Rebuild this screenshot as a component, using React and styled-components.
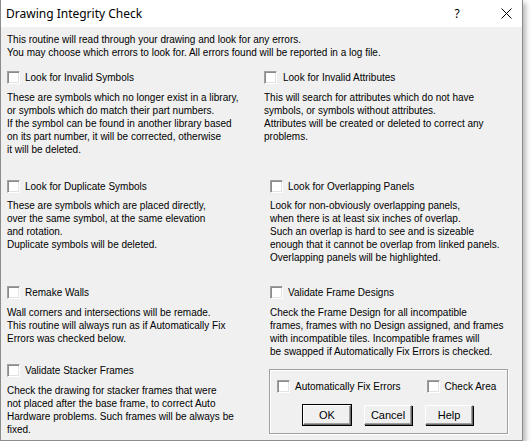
import React from 'react';
import styled, { createGlobalStyle } from 'styled-components';

const GlobalStyle = createGlobalStyle`
    html, body {
        margin: 0;
        padding: 0;
        background: #ffffff;
    }
`

const Window = styled.div`
    width: 521px;
    height: 440px;
    border: 1px solid #8c8c8c;
    border-top: none;
    background: #f0f0f0;
    box-shadow: 3px 3px 5px rgba(0, 0, 0, 0.28);
    display: flex;
    flex-direction: column;
    font-family: "Liberation Sans", Arial, sans-serif;
    font-size: 10px;
    line-height: 13px;
    color: #000;
    overflow: hidden;
`

const TitleBar = styled.div`
    height: 27px;
    background: #ffffff;
    display: flex;
    align-items: center;
    padding-left: 5px;
    font-family: "Noto Sans", "Open Sans", sans-serif;
    font-size: 12px;
`

const Title = styled.span`
    flex: 1;
    padding-bottom: 1px;
`

const TitleButton = styled.div`
    width: ${p => p.w}px;
    margin-right: ${p => p.space || 0}px;
    height: 27px;
    display: flex;
    align-items: center;
    justify-content: center;
    font-size: 12px;
`

const Body = styled.div`
    padding: 6px 0 0 6px;
    display: flex;
    flex-direction: column;
`

const Text = styled.div`
    white-space: nowrap;
`

const Row = styled.div`
    display: grid;
    grid-template-columns: 257px 1fr;
    margin-top: ${p => p.top}px;
    align-items: start;
`

const Cell = styled.div`
    padding-left: ${p => p.indent || 0}px;
    display: flex;
    flex-direction: column;
`

const CheckLabel = styled.label`
    display: flex;
    align-items: center;
    gap: ${p => p.gap || 5}px;
    height: 13px;
    white-space: nowrap;
    margin-bottom: ${p => p.below || 0}px;
`

const Box = styled.span`
    box-sizing: border-box;
    width: 13px;
    height: 13px;
    background: #fff;
    border: 1px solid;
    border-color: #a0a0a0 #ffffff #ffffff #a0a0a0;
    box-shadow: inset 1px 1px 0 #8a8a8a, inset -1px -1px 0 #e3e3e3;
    flex: none;
`

const GroupBox = styled.div`
    box-sizing: border-box;
    width: 239px;
    height: 65px;
    margin-left: 5px;
    margin-top: 5px;
    border: 1px solid #a0a0a0;
    box-shadow: 1px 1px 0 #fff, inset 1px 1px 0 #fff;
    padding: 10px 0 0 7px;
    display: flex;
    flex-direction: column;
`

const OptionRow = styled.div`
    display: flex;
    gap: 26px;
`

const ButtonRow = styled.div`
    display: flex;
    gap: 13px;
    margin-top: 12px;
    padding-left: 26px;
`

const Button = styled.button`
    box-sizing: border-box;
    width: 48px;
    height: 20px;
    padding: 0;
    background: #f0f0f0;
    font-family: "Liberation Sans", Arial, sans-serif;
    font-size: 11px;
    color: #000;
    border: 1px solid;
    border-color: #ffffff #696969 #696969 #ffffff;
    box-shadow: ${p => p.primary
        ? '0 0 0 1px #000, inset -1px -1px 0 #a0a0a0'
        : 'inset -1px -1px 0 #a0a0a0, 1px 1px 0 #000'};
`

const Check = ({ children, gap, below }) => (
    <CheckLabel gap={gap} below={below}>
        <Box />
        <span>{children}</span>
    </CheckLabel>
)

const Lines = ({ lines }) => (
    <>
        {lines.map((l, i) => <Text key={i}>{l}</Text>)}
    </>
)

const App = () => {
    return (
        <>
            <GlobalStyle />
            <Window>
                <TitleBar>
                    <Title>Drawing Integrity Check</Title>
                    <TitleButton w={40} space={13}>?</TitleButton>
                    <TitleButton w={32}>
                        <svg width="11" height="11" viewBox="0 0 11 11">
                            <path d="M0.5 0.5 L10.5 10.5 M10.5 0.5 L0.5 10.5" stroke="#000" strokeWidth="1" />
                        </svg>
                    </TitleButton>
                </TitleBar>
                <Body>
                    <Lines lines={[
                        'This routine will read through your drawing and look for any errors.',
                        'You may choose which errors to look for. All errors found will be reported in a log file.',
                    ]} />

                    <Row top={12}>
                        <Cell>
                            <Check below={7}>Look for Invalid Symbols</Check>
                            <Lines lines={[
                                'These are symbols which no longer exist in a library,',
                                'or symbols which do match their part numbers.',
                                'If the symbol can be found in another library based',
                                'on its part number, it will be corrected, otherwise',
                                'it will be deleted.',
                            ]} />
                        </Cell>
                        <Cell>
                            <Check gap={6} below={7}>Look for Invalid Attributes</Check>
                            <Lines lines={[
                                'This will search for attributes which do not have',
                                'symbols, or symbols without attributes.',
                                'Attributes will be created or deleted to correct any',
                                'problems.',
                            ]} />
                        </Cell>
                    </Row>

                    <Row top={24}>
                        <Cell>
                            <Check below={6}>Look for Duplicate Symbols</Check>
                            <Lines lines={[
                                'These are symbols which are placed directly,',
                                'over the same symbol, at the same elevation',
                                'and rotation.',
                                'Duplicate symbols will be deleted.',
                            ]} />
                        </Cell>
                        <Cell indent={6}>
                            <Check below={6}>Look for Overlapping Panels</Check>
                            <Lines lines={[
                                'Look for non-obviously overlapping panels,',
                                'when there is at least six inches of overlap.',
                                'Such an overlap is hard to see and is sizeable',
                                'enough that it cannot be overlap from linked panels.',
                                'Overlapping panels will be highlighted.',
                            ]} />
                        </Cell>
                    </Row>

                    <Row top={22}>
                        <Cell>
                            <Check below={7}>Remake Walls</Check>
                            <Lines lines={[
                                'Wall corners and intersections will be remade.',
                                'This routine will always run as if Automatically Fix',
                                'Errors was checked below.',
                            ]} />
                        </Cell>
                        <Cell indent={6}>
                            <Check below={7}>Validate Frame Designs</Check>
                            <Lines lines={[
                                'Check the Frame Design for all incompatible',
                                'frames, frames with no Design assigned, and frames',
                                'with incompatible tiles. Incompatible frames will',
                                'be swapped if Automatically Fix Errors is checked.',
                            ]} />
                        </Cell>
                    </Row>

                    <Row top={6}>
                        <Cell>
                            <Check below={7}>Validate Stacker Frames</Check>
                            <Lines lines={[
                                'Check the drawing for stacker frames that were',
                                'not placed after the base frame, to correct Auto',
                                'Hardware problems. Such frames will be always be',
                                'fixed.',
                            ]} />
                        </Cell>
                        <Cell>
                            <GroupBox>
                                <OptionRow>
                                    <Check>Automatically Fix Errors</Check>
                                    <Check>Check Area</Check>
                                </OptionRow>
                                <ButtonRow>
                                    <Button primary>OK</Button>
                                    <Button>Cancel</Button>
                                    <Button>Help</Button>
                                </ButtonRow>
                            </GroupBox>
                        </Cell>
                    </Row>
                </Body>
            </Window>
        </>
    )
}

export default App
